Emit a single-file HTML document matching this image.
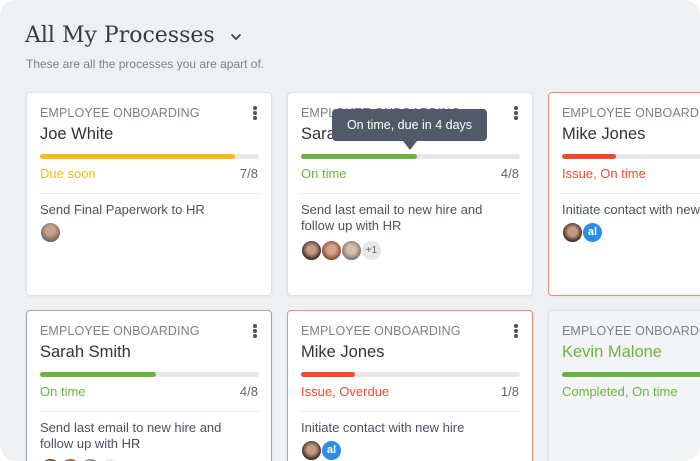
<!DOCTYPE html>
<html><head><meta charset="utf-8"><style>
*{margin:0;padding:0;box-sizing:border-box}
html,body{width:700px;height:461px;overflow:hidden}
body{background:#fff;font-family:"Liberation Sans",sans-serif;position:relative}
.panel{position:absolute;left:0;top:0;width:700px;height:461px;background:#eef1f4;border-radius:16px;overflow:hidden}
h1{position:absolute;left:25px;top:23px;font-family:"DejaVu Serif",serif;font-weight:normal;font-size:22px;color:#3a3a3a;white-space:nowrap}
svg.chev{position:absolute;left:230px;top:33px;width:12px;height:8px;display:block}
.sub{position:absolute;left:26px;top:57px;font-size:12px;color:#7a818b}
.card{position:absolute;width:246px;height:204px;background:#fff;border:1px solid #dde1e5;border-radius:4px;box-shadow:0 1px 3px rgba(0,0,0,.05)}
.red{border-color:#f58a75}
.sel{border-color:#9aa5b1}
.grey{background:#f3f4f5}
.lab{position:absolute;left:13px;top:13px;font-size:12.5px;color:#7a818b;white-space:nowrap;letter-spacing:.1px}
.name{position:absolute;left:13px;top:32px;font-size:16.5px;color:#333;white-space:nowrap}
.bar{position:absolute;left:13px;top:61px;width:219px;height:5px;background:#e6e7e8;border-radius:3px}
.bar i{position:absolute;left:0;top:0;height:5px;border-radius:3px}
.st{position:absolute;left:13px;top:73px;font-size:13px;white-space:nowrap}
.cnt{position:absolute;right:13px;top:73px;font-size:13px;color:#666}
.div{position:absolute;left:13px;top:100px;width:219px;height:1px;background:#e6e7e8}
.task{position:absolute;left:13px;top:109px;font-size:13px;line-height:16px;color:#4a5260;width:225px;white-space:nowrap}
.av{position:absolute;top:0;width:21px;height:21px;border-radius:50%;border:1px solid #fff}
.dots{position:absolute;right:14px;top:13px;width:4px}
.dots b{display:block;width:3.5px;height:3.5px;border-radius:50%;background:#555;margin-bottom:1.5px}
.g{color:#6db33f}.y{color:#f5b915}.r{color:#ef4b2e}
.tip{position:absolute;left:332px;top:109px;width:155px;height:32px;background:#505a68;border-radius:4px;color:#fff;font-size:12.5px;text-align:center;line-height:32px}
.tip:after{content:"";position:absolute;left:71px;top:32px;border:7px solid transparent;border-top:9px solid #505a68;border-bottom:0}
</style></head><body><div class="panel">
<h1>All My Processes</h1>
<svg class="chev" width="12" height="8" viewBox="0 0 12 8"><path d="M1.5 1.5 6 6 10.5 1.5" fill="none" stroke="#444" stroke-width="1.8"/></svg>
<div class="sub">These are all the processes you are apart of.</div>

<div class="card" style="left:26px;top:92px">
<div class="lab">EMPLOYEE ONBOARDING</div><div class="dots"><b></b><b></b><b></b></div>
<div class="name">Joe White</div>
<div class="bar"><i style="width:195px;background:#f5bd1a"></i></div>
<div class="st y">Due soon</div><div class="cnt">7/8</div><div class="div"></div>
<div class="task">Send Final Paperwork to HR<div style="position:relative;height:22px;margin-top:4px"><span class="av" style="left:0;background:radial-gradient(circle at 50% 40%,#c9a18a 30%,#6b6a5f 70%)"></span></div></div>
</div>

<div class="card" style="left:287px;top:92px">
<div class="lab">EMPLOYEE ONBOARDING</div><div class="dots"><b></b><b></b><b></b></div>
<div class="name">Sarah Smith</div>
<div class="bar"><i style="width:116px;background:#6db33f"></i></div>
<div class="st g">On time</div><div class="cnt">4/8</div><div class="div"></div>
<div class="task">Send last email to new hire and<br>follow up with HR<div style="position:relative;height:22px;margin-top:6px">
<span class="av" style="left:0;background:radial-gradient(circle at 50% 45%,#c49a80 30%,#3b2a22 70%)"></span>
<span class="av" style="left:20px;background:radial-gradient(circle at 50% 45%,#d2a48a 30%,#8a4a30 70%)"></span>
<span class="av" style="left:40px;background:radial-gradient(circle at 50% 45%,#d8c0a8 30%,#777 70%)"></span>
<span class="av" style="left:60px;background:#e6e7e8;color:#666;font-size:10px;text-align:center;line-height:19px">+1</span></div></div>
</div>

<div class="card red" style="left:548px;top:92px">
<div class="lab">EMPLOYEE ONBOARDING</div>
<div class="name">Mike Jones</div>
<div class="bar"><i style="width:54px;background:#ef4b2e"></i></div>
<div class="st r">Issue, On time</div><div class="div"></div>
<div class="task">Initiate contact with new hire<div style="position:relative;height:22px;margin-top:4px">
<span class="av" style="left:0;background:radial-gradient(circle at 50% 45%,#c49a80 30%,#3b2a22 70%)"></span>
<span class="av" style="left:20px;background:#2b8fe8;color:#fff;font-size:11px;font-weight:bold;text-align:center;line-height:19px">al</span></div></div>
</div>

<div class="card sel" style="left:26px;top:310px;height:170px">
<div class="lab">EMPLOYEE ONBOARDING</div><div class="dots"><b></b><b></b><b></b></div>
<div class="name">Sarah Smith</div>
<div class="bar"><i style="width:116px;background:#6db33f"></i></div>
<div class="st g">On time</div><div class="cnt">4/8</div><div class="div"></div>
<div class="task">Send last email to new hire and<br>follow up with HR<div style="position:relative;height:22px;margin-top:6px">
<span class="av" style="left:0;background:radial-gradient(circle at 50% 45%,#c49a80 30%,#3b2a22 70%)"></span>
<span class="av" style="left:20px;background:radial-gradient(circle at 50% 45%,#d2a48a 30%,#8a4a30 70%)"></span>
<span class="av" style="left:40px;background:radial-gradient(circle at 50% 45%,#d8c0a8 30%,#777 70%)"></span>
<span class="av" style="left:60px;background:#e6e7e8;color:#666;font-size:10px;text-align:center;line-height:19px">+1</span></div></div>
</div>

<div class="card red" style="left:287px;top:310px;height:170px">
<div class="lab">EMPLOYEE ONBOARDING</div><div class="dots"><b></b><b></b><b></b></div>
<div class="name">Mike Jones</div>
<div class="bar"><i style="width:54px;background:#ef4b2e"></i></div>
<div class="st r">Issue, Overdue</div><div class="cnt">1/8</div><div class="div"></div>
<div class="task">Initiate contact with new hire<div style="position:relative;height:22px;margin-top:4px">
<span class="av" style="left:0;background:radial-gradient(circle at 50% 45%,#c49a80 30%,#3b2a22 70%)"></span>
<span class="av" style="left:20px;background:#2b8fe8;color:#fff;font-size:11px;font-weight:bold;text-align:center;line-height:19px">al</span></div></div>
</div>

<div class="card grey" style="left:548px;top:310px;height:170px">
<div class="lab">EMPLOYEE ONBOARDING</div>
<div class="name g">Kevin Malone</div>
<div class="bar"><i style="width:219px;background:#6db33f"></i></div>
<div class="st g">Completed, On time</div>
</div>

<div class="tip">On time, due in 4 days</div>
</div></body></html>
